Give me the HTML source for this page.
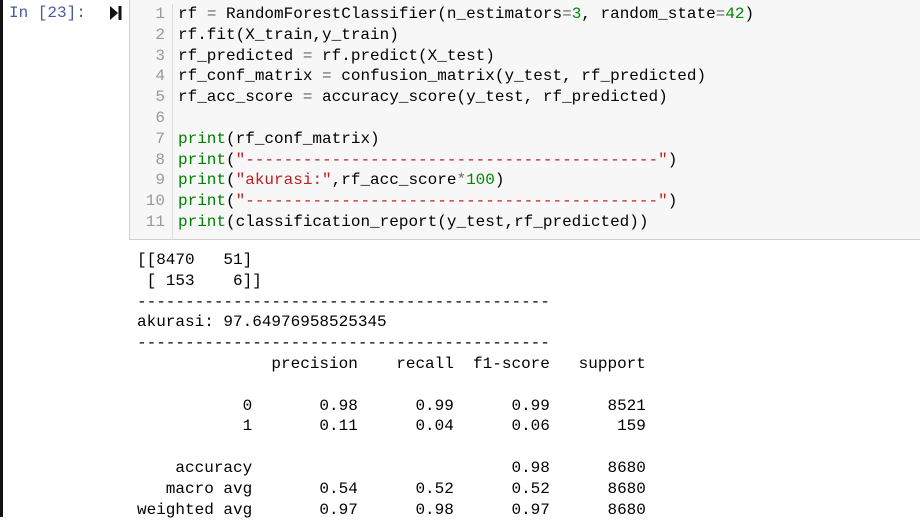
<!DOCTYPE html>
<html><head><style>
body{margin:0;width:920px;height:517px;overflow:hidden;background:#fff;position:relative;font-family:"Liberation Mono",monospace;font-size:16px;}
.bar{position:absolute;left:0;top:0;width:3px;height:517px;background:#111;}
.prompt{position:absolute;left:9px;top:3px;color:#4a5a9a;line-height:21px;}
.run{position:absolute;left:110px;top:6px;}
.cell{position:absolute;left:129px;top:-2px;width:800px;height:242px;background:#f7f7f7;border:1px solid #cfcfcf;box-sizing:border-box;}
.gut{position:absolute;left:130px;top:4px;width:42px;border-right:1px solid #ddd;height:236px;}
.nums{position:absolute;left:130px;top:4px;width:35px;text-align:right;color:#999;line-height:20.8px;white-space:pre;}
.code{position:absolute;left:178px;top:4px;line-height:20.8px;white-space:pre;color:#000;}
.k{color:#008000}.s{color:#ba2121}.n{color:#080}.o{color:#666}
.out{position:absolute;left:137px;top:250px;line-height:20.8px;white-space:pre;color:#000;}
</style></head><body>
<div class="bar"></div>
<div class="prompt">In [23]:</div>
<svg class="run" width="12" height="14" viewBox="0 0 12 14"><path d="M0 0L8 7L0 14Z" fill="#111"/><rect x="8.5" y="0" width="3" height="14" fill="#111"/></svg>
<div class="cell"></div>
<div class="gut"></div>
<div class="nums">1
2
3
4
5
6
7
8
9
10
11</div>
<div class="code">rf <span class="o">=</span> RandomForestClassifier(n_estimators<span class="o">=</span><span class="n">3</span>, random_state<span class="o">=</span><span class="n">42</span>)
rf.fit(X_train,y_train)
rf_predicted <span class="o">=</span> rf.predict(X_test)
rf_conf_matrix <span class="o">=</span> confusion_matrix(y_test, rf_predicted)
rf_acc_score <span class="o">=</span> accuracy_score(y_test, rf_predicted)

<span class="k">print</span>(rf_conf_matrix)
<span class="k">print</span>(<span class="s">"-------------------------------------------"</span>)
<span class="k">print</span>(<span class="s">"akurasi:"</span>,rf_acc_score<span class="o">*</span><span class="n">100</span>)
<span class="k">print</span>(<span class="s">"-------------------------------------------"</span>)
<span class="k">print</span>(classification_report(y_test,rf_predicted))</div>
<div class="out">[[8470   51]
 [ 153    6]]
-------------------------------------------
akurasi: 97.64976958525345
-------------------------------------------
              precision    recall  f1-score   support

           0       0.98      0.99      0.99      8521
           1       0.11      0.04      0.06       159

    accuracy                           0.98      8680
   macro avg       0.54      0.52      0.52      8680
weighted avg       0.97      0.98      0.97      8680</div>
</body></html>
